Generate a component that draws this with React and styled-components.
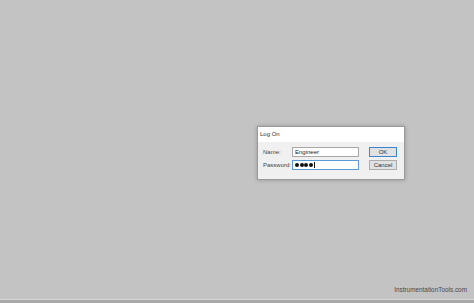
import React from 'react';
import styled, { createGlobalStyle } from 'styled-components';

const Global = createGlobalStyle`
  html, body {
    margin: 0;
    padding: 0;
    background: #c3c3c3;
  }
  * { box-sizing: border-box; }
`;

const Screen = styled.div`
  width: 474px;
  height: 303px;
  display: flex;
  flex-direction: column;
  font-family: "Liberation Sans", Arial, sans-serif;
  overflow: hidden;
`;

const Desktop = styled.div`
  flex: 1;
  display: flex;
  flex-direction: column;
  padding: 126px 69px 0 257px;
`;

const Dialog = styled.div`
  width: 148px;
  height: 54px;
  background: #f0f0f0;
  border: 1px solid #9a9a9a;
  box-shadow: 0 0 4px rgba(0, 0, 0, 0.25);
  display: flex;
  flex-direction: column;
`;

const TitleBar = styled.div`
  height: 15px;
  background: #ffffff;
  font-size: 6px;
  color: #333;
  padding: 4px 0 0 2px;
`;

const Body = styled.div`
  flex: 1;
  display: flex;
  padding: 5px 5px 0 5px;
  gap: 10px;
`;

const Fields = styled.div`
  display: flex;
  flex-direction: column;
  gap: 3px;
`;

const Row = styled.div`
  display: flex;
  align-items: center;
  height: 10px;
`;

const Label = styled.span`
  width: 29px;
  font-size: 6px;
  color: #444;
`;

const Input = styled.div`
  width: 67px;
  height: 10px;
  background: #fff;
  border: 1px solid ${p => (p.focused ? '#5a9ad6' : '#a8a8a8')};
  font-size: 6px;
  color: #222;
  padding-left: 2px;
  display: flex;
  align-items: center;
`;

const Dots = styled.span`
  display: flex;
  gap: 0.5px;
`;

const Dot = styled.span`
  width: 4px;
  height: 4px;
  border-radius: 50%;
  background: #111;
`;

const Caret = styled.span`
  width: 1px;
  height: 6px;
  margin-left: 1px;
  background: #111;
`;

const Buttons = styled.div`
  display: flex;
  flex-direction: column;
  gap: 3px;
`;

const Button = styled.div`
  width: 28px;
  height: 10px;
  background: #e1e1e1;
  border: 1px solid ${p => (p.primary ? '#3c86d0' : '#adadad')};
  font-size: 6px;
  color: #333;
  display: flex;
  align-items: center;
  justify-content: center;
`;

const Footer = styled.div`
  display: flex;
  justify-content: flex-end;
  padding: 0 7px 6px 0;
  font-size: 6.4px;
  color: #4a4a4a;
`;

const Taskbar = styled.div`
  height: 4px;
  background: #a9a9a9;
  border-top: 1px solid #d6d6d6;
`;

export default function App() {
  return (
    <Screen>
      <Global />
      <Desktop>
        <Dialog>
          <TitleBar>Log On</TitleBar>
          <Body>
            <Fields>
              <Row>
                <Label>Name:</Label>
                <Input>Engineer</Input>
              </Row>
              <Row>
                <Label>Password:</Label>
                <Input focused>
                  <Dots>
                    <Dot />
                    <Dot />
                    <Dot />
                    <Dot />
                  </Dots>
                  <Caret />
                </Input>
              </Row>
            </Fields>
            <Buttons>
              <Button primary>OK</Button>
              <Button>Cancel</Button>
            </Buttons>
          </Body>
        </Dialog>
      </Desktop>
      <Footer>InstrumentationTools.com</Footer>
      <Taskbar />
    </Screen>
  );
}
